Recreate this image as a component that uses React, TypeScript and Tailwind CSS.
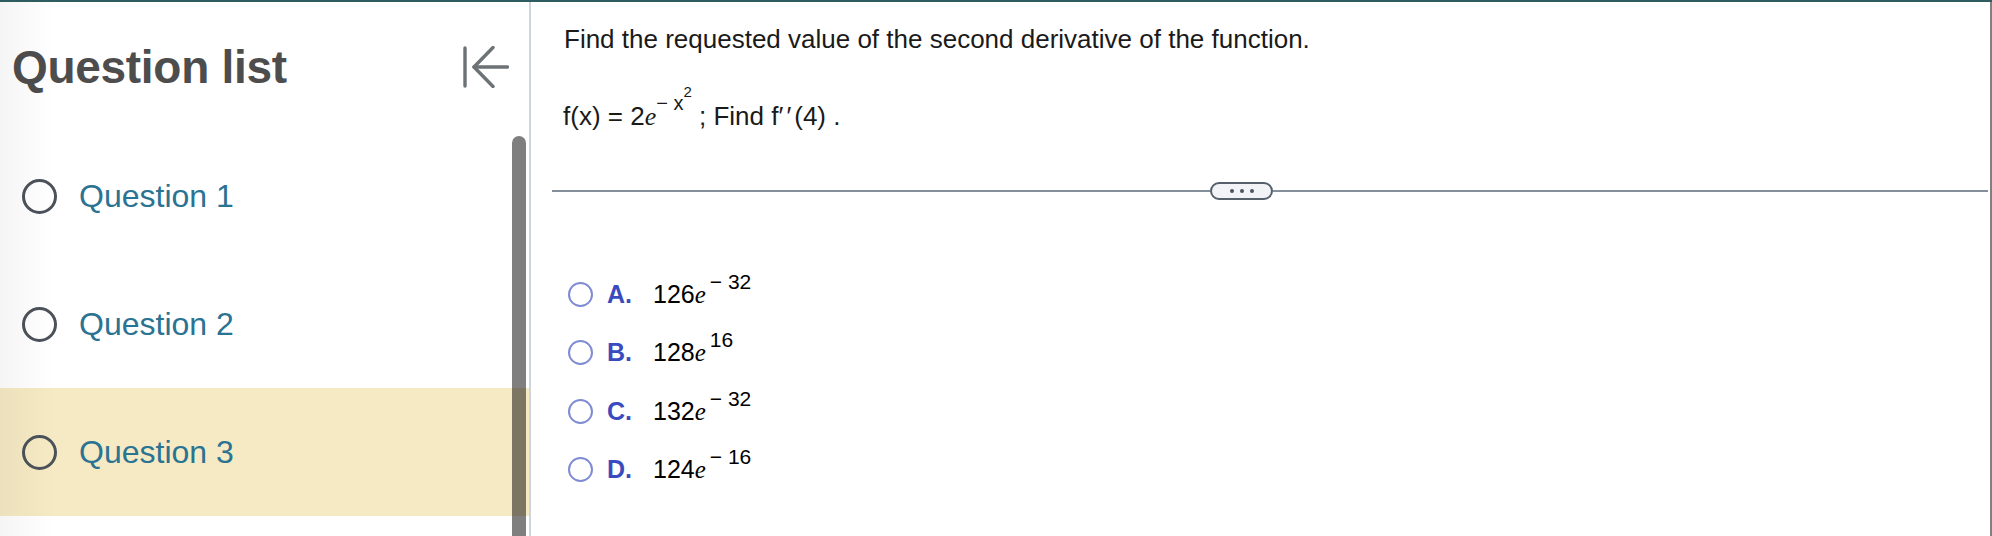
import { Fragment } from "react";

type Choice = {
  label: string;
  base: string;
  exp: string;
};

const questions = ["Question 1", "Question 2", "Question 3"];

const choices: Choice[] = [
  { label: "A.", base: "126", exp: "− 32" },
  { label: "B.", base: "128", exp: "16" },
  { label: "C.", base: "132", exp: "− 32" },
  { label: "D.", base: "124", exp: "− 16" },
];

function CollapseIcon() {
  return (
    <svg width="46" height="42" viewBox="0 0 46 42" fill="none" stroke="#6d7275" strokeWidth="3.4" strokeLinecap="round" strokeLinejoin="round">
      <path d="M2 2v38" />
      <path d="M30 1.5 11 21l19 19.5" />
      <path d="M11 21h33.5" />
    </svg>
  );
}

function ItalicE() {
  return <span className="font-['Liberation_Serif',serif] italic">e</span>;
}

export default function App() {
  return (
    <div className="w-[1992px] h-[536px] flex flex-col bg-white overflow-hidden font-['Liberation_Sans',Arial,sans-serif]">
      <div className="h-[2px] bg-[#2e5d61] shrink-0" />
      <div className="flex flex-1 min-h-0">
        {/* question list sidebar */}
        <aside className="relative w-[529px] shrink-0 flex flex-col">
          <div className="pointer-events-none absolute inset-y-0 left-0 w-[55px] bg-gradient-to-r from-black/[0.04] to-transparent z-10" />
          <div className="h-[130px] shrink-0 flex items-center justify-between pl-[12px] pr-[20px]">
            <h1 className="text-[46px] font-bold text-[#4d4d4d] tracking-[-0.3px]">Question list</h1>
            <CollapseIcon />
          </div>
          <ul>
            {questions.map((q, i) => (
              <li
                key={q}
                className={`h-[128px] flex items-center gap-[22px] pl-[22px] ${i === 2 ? "bg-[#f6eac4]" : ""}`}
              >
                <span className="w-[35px] h-[35px] rounded-full border-[3px] border-[#4b525a] shrink-0" />
                <span className="text-[32px] text-[#2a7393]">{q}</span>
              </li>
            ))}
          </ul>
          <div className="absolute right-[3px] top-[134px] bottom-0 w-[14px] rounded-t-full bg-black/50" />
        </aside>

        <div className="w-[2px] bg-[#d0d4dc] shrink-0" />

        {/* question body */}
        <main className="flex-1 flex flex-col text-[#1a1a1a]">
          <p className="pt-[22px] pl-[33px] text-[26px] leading-[30px]">
            Find the requested value of the second derivative of the function.
          </p>
          <p className="mt-[47px] pl-[32px] text-[26px] leading-[30px] whitespace-pre">
            f(x) = 2<ItalicE />
            <span className="relative -top-[15px] text-[20px] leading-none">{"−"} x</span>
            <span className="relative -top-[28px] text-[15px] leading-none">2</span>
            {" "}; Find f<span className="tracking-[3px]">′′</span>(4) .
          </p>

          <div className="mt-[49px] h-[20px] flex items-center pl-[21px] pr-[2px]">
            <div className="w-[658px] h-[2px] bg-[#858e9b]" />
            <button className="w-[63px] h-[18px] rounded-full border-2 border-[#56606c] bg-[#f1f3f6] flex items-center justify-center gap-[6px]">
              <span className="w-[4px] h-[4px] rounded-full bg-[#4b5563]" />
              <span className="w-[4px] h-[4px] rounded-full bg-[#4b5563]" />
              <span className="w-[4px] h-[4px] rounded-full bg-[#4b5563]" />
            </button>
            <div className="flex-1 h-[2px] bg-[#858e9b]" />
          </div>

          <ul className="mt-[64px] pl-[37px]">
            {choices.map((c) => (
              <li key={c.label} className="h-[58.5px] flex items-center">
                <span className="w-[25px] h-[25px] rounded-full border-[2.5px] border-[#7f8cd3] shrink-0" />
                <span className="ml-[14px] w-[46px] text-[25px] font-bold text-[#3a4bbf]">{c.label}</span>
                <span className="text-[25px] text-black whitespace-pre">
                  {c.base}
                  <ItalicE />
                  <span className="relative -top-[14px] ml-[4px] text-[21px] leading-none">
                    {c.exp.split(" ").map((part, i) => (
                      <Fragment key={i}>
                        {i > 0 && " "}
                        {part}
                      </Fragment>
                    ))}
                  </span>
                </span>
              </li>
            ))}
          </ul>
        </main>

        <div className="w-[2px] bg-[#808080] shrink-0" />
      </div>
    </div>
  );
}
